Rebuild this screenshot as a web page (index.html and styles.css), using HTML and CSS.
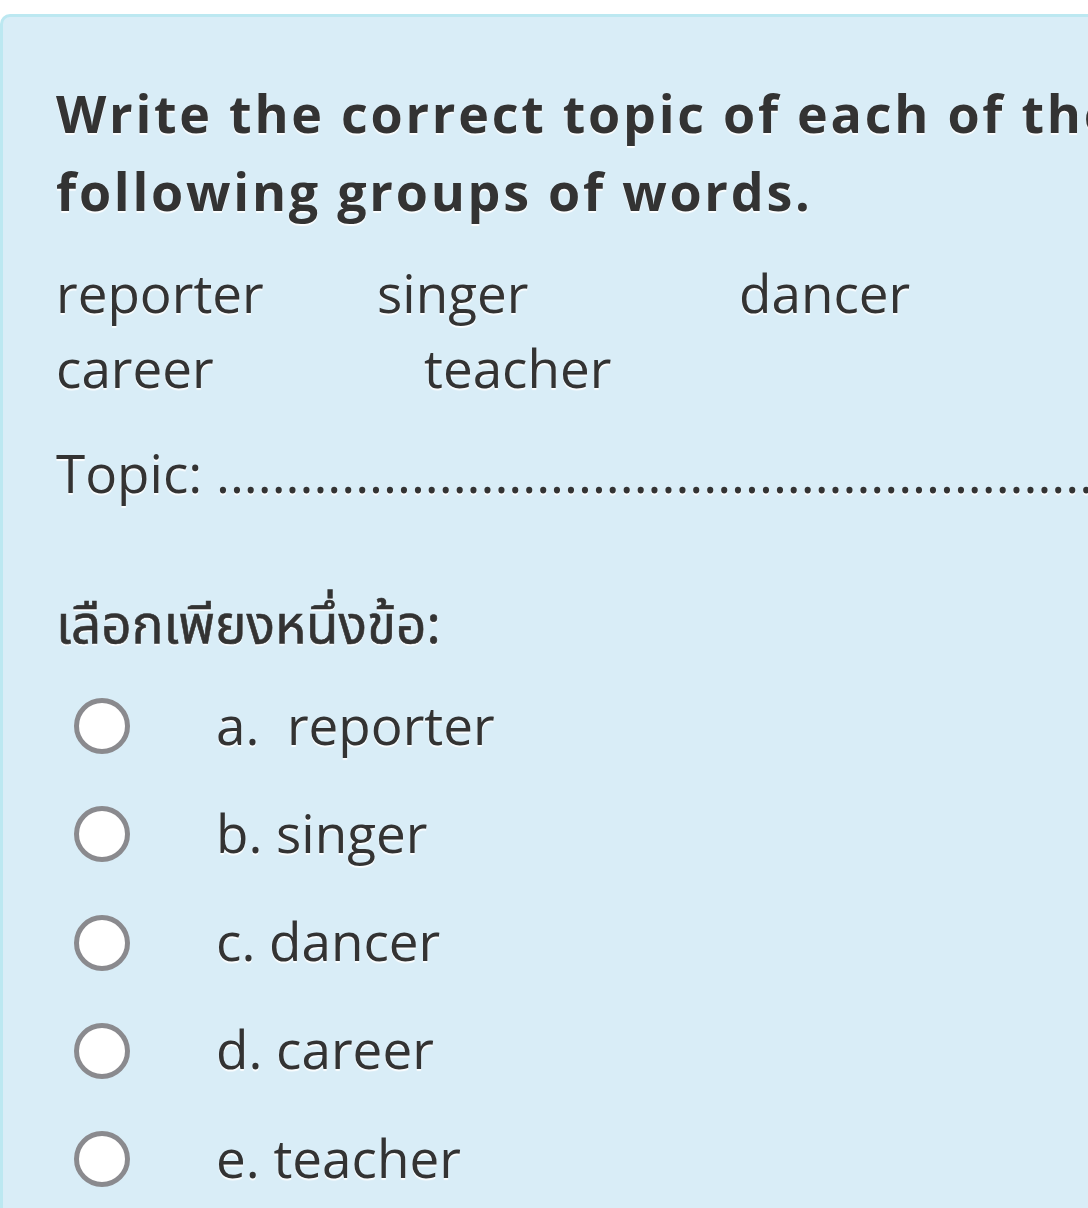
FILE: index.html
```html
<!DOCTYPE html>
<html>
<head>
<meta charset="utf-8">
<link rel="stylesheet" href="styles.css">
</head>
<body>
<div class="panel">
  <h1 class="title">Write the correct topic of each of the following groups of words.</h1>
  <div class="words">
    <div class="row"><span class="w w-rep">reporter</span><span class="w w-sing">singer</span><span class="w">dancer</span></div>
    <div class="row"><span class="w w-car">career</span><span class="w">teacher</span></div>
  </div>
  <div class="topic">Topic: <span class="dots">.........................................................................</span></div>
  <div class="prompt">เลือกเพียงหนึ่งข้อ:</div>
  <div class="options">
    <label class="opt"><span class="radio"></span><span class="lbl">a.&nbsp; reporter</span></label>
    <label class="opt"><span class="radio"></span><span class="lbl">b. singer</span></label>
    <label class="opt"><span class="radio"></span><span class="lbl">c. dancer</span></label>
    <label class="opt"><span class="radio"></span><span class="lbl">d. career</span></label>
    <label class="opt"><span class="radio"></span><span class="lbl">e. teacher</span></label>
  </div>
</div>
</body>
</html>
```
FILE: styles.css
```css
html, body {
  margin: 0;
  padding: 0;
  background: #ffffff;
  overflow: hidden;
}
body {
  width: 1088px;
  height: 1208px;
  font-family: "Open Sans", "Noto Sans", "Noto Sans Thai", sans-serif;
  color: #333333;
}
.panel {
  margin-top: 14px;
  width: 1150px;
  min-height: 1300px;
  box-sizing: border-box;
  background: #d9edf7;
  border: 3px solid #bce8f1;
  border-radius: 10px;
  padding: 0 0 0 53px;
  text-shadow: 0 2px 1px rgba(255, 255, 255, 0.9);
}
.title {
  margin: 57px 0 0 0;
  font-size: 52px;
  line-height: 78px;
  font-weight: 700;
  letter-spacing: 2.75px;
  width: 1085px;
}
.words {
  margin-top: 25px;
  font-size: 53px;
  line-height: 75px;
}
.row {
  display: flex;
  white-space: nowrap;
}
.w-rep { width: 321px; }
.w-sing { width: 362px; }
.w-car { width: 368px; }
.topic {
  margin-top: 30px;
  font-size: 53px;
  line-height: 75px;
  white-space: nowrap;
  overflow: hidden;
}
.dots {
  letter-spacing: 0;
}
.prompt {
  margin-top: 72px;
  font-size: 53px;
  line-height: 90px;
  font-family: "Noto Sans Thai", "Noto Sans", "Open Sans", sans-serif;
  -webkit-text-stroke: 0.6px #333333;
}
.options {
  margin-top: 0;
  display: flex;
  flex-direction: column;
}
.opt {
  display: flex;
  align-items: center;
  height: 108.25px;
  font-size: 53px;
}
.radio {
  box-sizing: border-box;
  width: 56px;
  height: 56px;
  margin-left: 18px;
  border: 5px solid #8a8a8e;
  border-radius: 50%;
  background: #ffffff;
  flex: none;
}
.lbl {
  margin-left: 86px;
  margin-top: -4px;
  white-space: pre;
}
```
